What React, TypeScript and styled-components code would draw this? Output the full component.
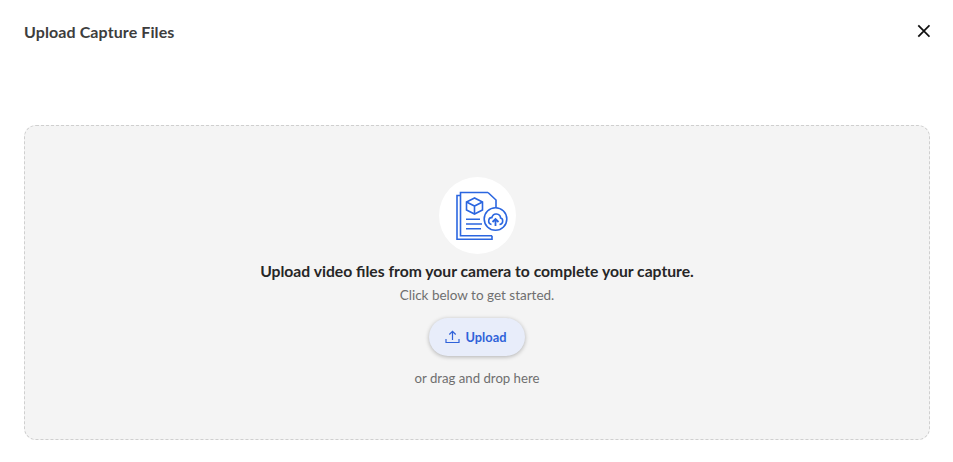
import styled, { createGlobalStyle } from 'styled-components';

const GlobalStyle = createGlobalStyle`
  html, body {
    margin: 0;
    background: #fff;
    font-family: 'Lato', 'Noto Sans', sans-serif;
  }
`;

const Page = styled.div`
  width: 953px;
  height: 462px;
  box-sizing: border-box;
  padding: 0 23px 22px 24px;
  display: flex;
  flex-direction: column;
  overflow: hidden;
`;

const Header = styled.header`
  height: 125px;
  flex: none;
  display: flex;
  align-items: flex-start;
  justify-content: space-between;
  padding-top: 22px;
  box-sizing: border-box;
`;

const Title = styled.h1`
  margin: 0;
  font-size: 16px;
  line-height: 19px;
  letter-spacing: 0.1px;
  font-weight: 700;
  color: #3d3d3d;
`;

const CloseButton = styled.button`
  width: 14px;
  height: 14px;
  margin: 2px 0 0 0;
  padding: 0;
  border: 0;
  background: none;
  display: block;
  color: #111;
`;

const DropZone = styled.section`
  flex: 1;
  box-sizing: border-box;
  background: #f4f4f4;
  border: 1px dashed #cfcfcf;
  border-radius: 12px;
  padding-top: 51px;
  display: flex;
  flex-direction: column;
  align-items: center;
`;

const IconDisc = styled.div`
  width: 77px;
  height: 77px;
  border-radius: 50%;
  background: #fff;
`;

const Lead = styled.p`
  margin: 7px 0 0;
  font-size: 15.7px;
  line-height: 20px;
  font-weight: 700;
  color: #262626;
`;

const Hint = styled.p<{ $gap: number; $size: number }>`
  margin: ${p => p.$gap}px 0 0;
  font-size: ${p => p.$size}px;
  line-height: 17px;
  color: #6f6f6f;
`;

const UploadButton = styled.button`
  margin-top: 14px;
  width: 96px;
  height: 38px;
  border: 0;
  border-radius: 19px;
  background: #e8edfa;
  box-shadow: 0 1px 4px rgba(0, 0, 0, 0.28);
  color: #2f62d9;
  font-family: inherit;
  font-size: 12.8px;
  font-weight: 700;
  display: flex;
  align-items: center;
  justify-content: center;
  gap: 6px;
  padding: 0 3px 0 0;
`;

function CaptureIcon() {
  return (
    <svg width="77" height="77" viewBox="0 0 77 77" fill="none" stroke="#2b66e0" strokeWidth="1.6">
      <path d="M21 18.500H18V62.300H53V58.700" />
      <path d="M49 15.500H21.500V58.700H53M49 15.500L57 23V31" />
      <path d="M35.500 21L27.500 25V33L35.500 37L43.500 33V25Z" />
      <path d="M27.500 25L35.500 29L43.500 25M35.500 29V37" />
      <path d="M27 42.300H41M27 47H43M27 51.700H42" />
      <circle cx="56.500" cy="42" r="11.300" fill="#fff" />
      <path d="M52.500 47.500C50 47 49.500 44.800 49.800 43.200C50.100 41.500 51.500 40.500 52.800 40.700C53.500 38.300 55.500 36.800 57.500 37C60.200 37.300 61.500 39.300 61.600 41C63 41.200 63.800 42.700 63.700 44.200C63.600 46 62.500 47.300 60.500 47.500" />
      <path d="M56.500 49V42M53.500 45L56.500 42L59.500 45" strokeWidth="1.800" />
    </svg>
  );
}

function UploadGlyph() {
  return (
    <svg width="15" height="14" viewBox="0 0 15 14" fill="none" stroke="currentColor" strokeWidth="1.200">
      <path d="M7.500 10V1.500M4.300 4.500L7.500 1.300L10.700 4.500" />
      <path d="M1 9V12.500H14V9" />
    </svg>
  );
}

export default function App() {
  return (
    <Page>
      <GlobalStyle />
      <Header>
        <Title>Upload Capture Files</Title>
        <CloseButton aria-label="Close">
          <svg width="14" height="14" viewBox="0 0 14 14" stroke="currentColor" strokeWidth="1.800">
            <path d="M2.300 1.300L13.500 12.700M13.500 1.300L2.300 12.700" />
          </svg>
        </CloseButton>
      </Header>
      <DropZone>
        <IconDisc>
          <CaptureIcon />
        </IconDisc>
        <Lead>Upload video files from your camera to complete your capture.</Lead>
        <Hint $gap={6} $size={13.5}>Click below to get started.</Hint>
        <UploadButton>
          <UploadGlyph />
          Upload
        </UploadButton>
        <Hint $gap={14} $size={13.2}>or drag and drop here</Hint>
      </DropZone>
    </Page>
  );
}
